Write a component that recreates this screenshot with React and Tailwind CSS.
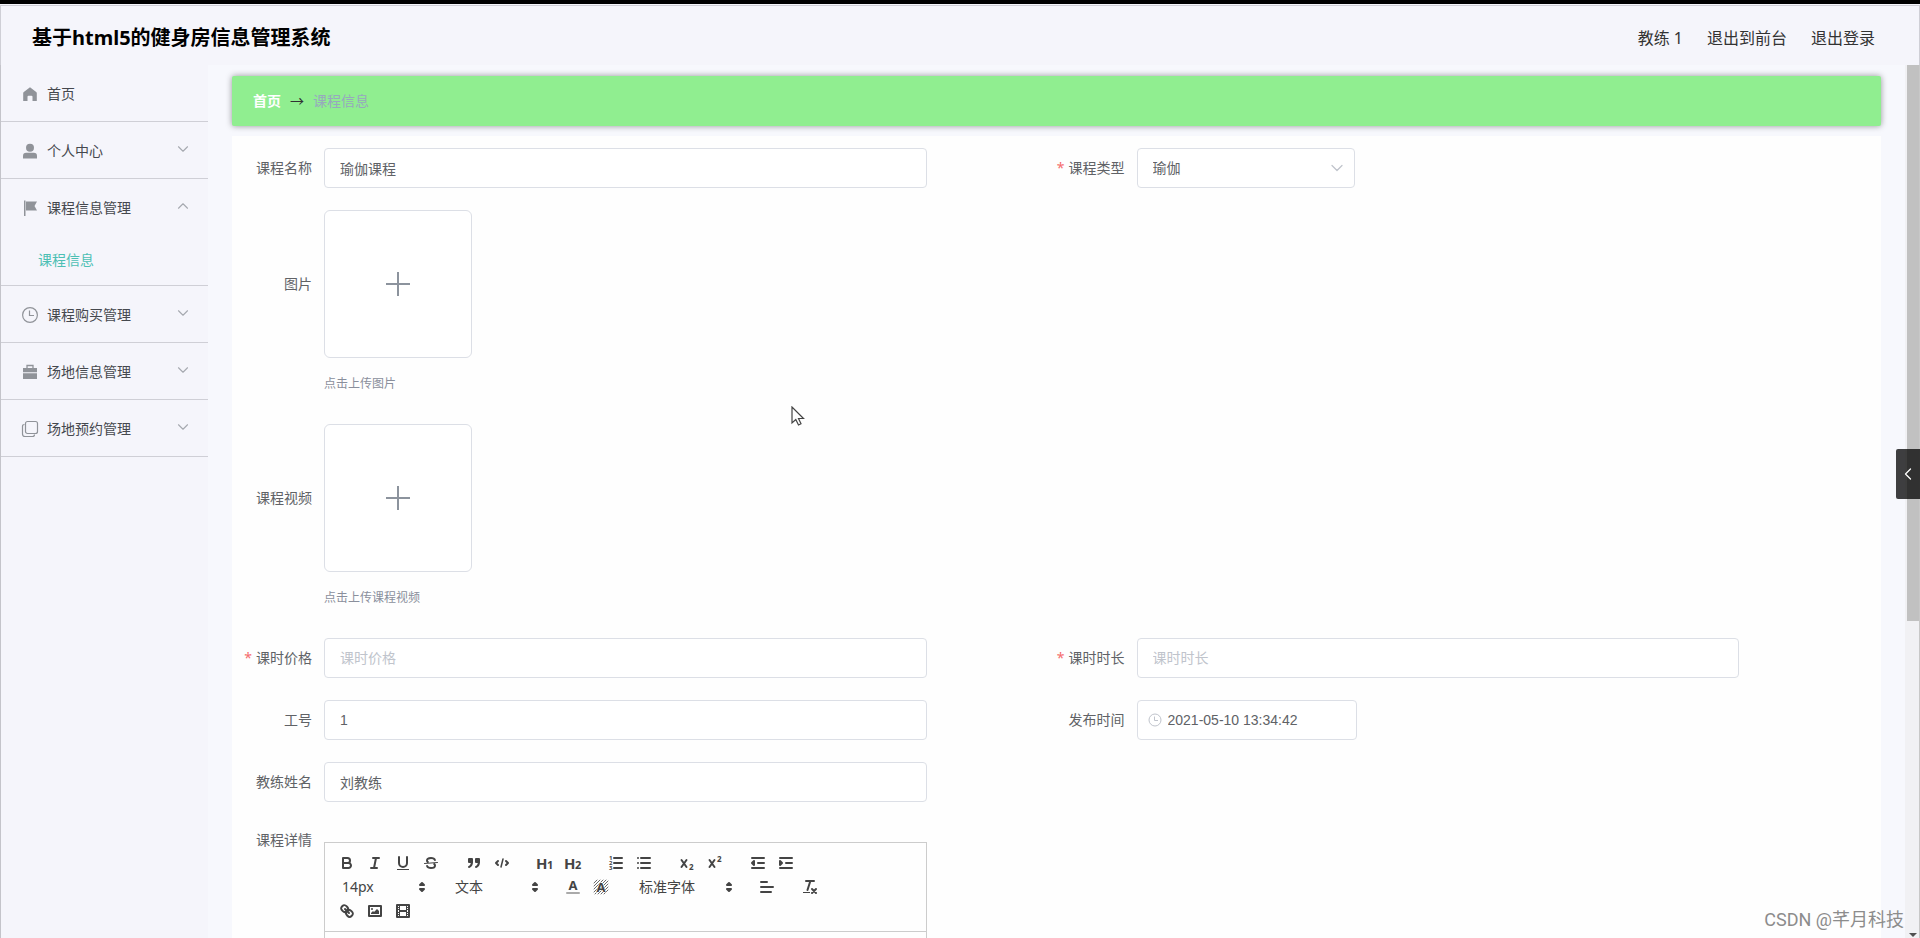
import React, { useState } from "react";
import { ChevronDown, ChevronUp, ChevronLeft } from "lucide-react";

// ---------- sidebar icons ----------
const HomeIcon = () => (
  <svg viewBox="0 0 18 18" className="w-[18px] h-[18px]" fill="currentColor">
    <path d="M9 2.2 L15.2 7 a1.4 1.4 0 0 1 .6 1.2 V16 h-4.3 v-4.2 a1 1 0 0 0-1-1 h-3 a1 1 0 0 0-1 1 V16 H2.200 V8.200 A1.400 1.400 0 0 1 2.800 7 Z" />
  </svg>
);
const UserIcon = () => (
  <svg viewBox="0 0 18 18" className="w-[18px] h-[18px]" fill="currentColor">
    <circle cx="9" cy="5.700" r="4" />
    <path d="M2 16.500 v-2.500 a3.200 3.200 0 0 1 3.200-3.200 h7.600 a3.200 3.200 0 0 1 3.200 3.200 v2.500 Z" />
  </svg>
);
const FlagIcon = () => (
  <svg viewBox="0 0 18 18" className="w-[18px] h-[18px]" fill="currentColor">
    <path d="M3 1.500 h1.500 v15.500 H3 Z" />
    <path d="M5 2.500 H16 l-2.500 4.500 2.500 4.500 H5 Z" />
  </svg>
);
const ClockIcon = () => (
  <svg viewBox="0 0 18 18" className="w-[18px] h-[18px]" fill="none" stroke="currentColor" strokeWidth="1.200">
    <circle cx="9" cy="9" r="7.400" />
    <path d="M8.500 4.500 V9.500 H13" />
  </svg>
);
const CaseIcon = () => (
  <svg viewBox="0 0 18 18" className="w-[18px] h-[18px]" fill="currentColor">
    <path d="M6 5 V2.500 h6 V5" fill="none" stroke="currentColor" strokeWidth="1.300" />
    <path d="M2 5 h14 v4.200 H2 Z M2 10.200 h14 V16 H2 Z" />
  </svg>
);
const CopyIcon = () => (
  <svg viewBox="0 0 18 18" className="w-[18px] h-[18px]" fill="none" stroke="currentColor" strokeWidth="1.200">
    <rect x="4.500" y="1.500" width="12" height="12" rx="2" />
    <path d="M3.500 4.500 Q1.500 4.500 1.500 6.500 V14 Q1.500 16.500 4 16.500 H11.500 Q13.500 16.500 13.500 14.500" />
  </svg>
);

const MENU = [
  { title: "首页", icon: HomeIcon },
  { title: "个人中心", icon: UserIcon, children: [] },
  { title: "课程信息管理", icon: FlagIcon, children: ["课程信息"], open: true },
  { title: "课程购买管理", icon: ClockIcon, children: [] },
  { title: "场地信息管理", icon: CaseIcon, children: [] },
  { title: "场地预约管理", icon: CopyIcon, children: [] },
];

// ---------- editor toolbar icons ----------
const Icon = ({ children }) => (
  <svg
    viewBox="0 0 18 18"
    className="w-[18px] h-[18px] overflow-visible"
    fill="none"
    stroke="#444"
    strokeWidth="2"
    strokeLinecap="round"
    strokeLinejoin="round"
  >
    {children}
  </svg>
);

const Letter = ({ x, y, size, children, anchor = "start" }) => (
  <text
    x={x}
    y={y}
    fontSize={size}
    textAnchor={anchor}
    fill="#444"
    stroke="none"
    fontWeight="bold"
    fontFamily="Noto Sans, sans-serif"
  >
    {children}
  </text>
);

const ICONS = {
  bold: (
    <Icon>
      <path d="M5,4H9.500A2.500,2.500,0,0,1,12,6.500v0A2.500,2.500,0,0,1,9.500,9H5V4Z" />
      <path d="M5,9h5.500A2.500,2.500,0,0,1,13,11.500v0A2.500,2.500,0,0,1,10.500,14H5V9Z" />
    </Icon>
  ),
  italic: (
    <Icon>
      <path d="M7 4H13M5 14H11M8 14L10 4" />
    </Icon>
  ),
  underline: (
    <Icon>
      <path d="M5,3V9a4,4,0,0,0,8,0V3" />
      <rect fill="#444" stroke="none" x="3" y="15" width="12" height="1" />
    </Icon>
  ),
  strike: (
    <Icon>
      <path strokeWidth="1" d="M15.500 8.500L2.500 9.500" />
      <path d="M12.900 6C12.500 4.800 10.900 4 9 4 6.700 4 5 5 5 6.500 5 7.200 5.200 7.700 5.800 8M5.100 12C5.500 13.200 7.100 14 9 14 11.300 14 13 13 13 11.500 13 10.800 12.800 10.300 12.200 10" />
    </Icon>
  ),
  blockquote: (
    <Icon>
      <rect fill="#444" x="4" y="5" width="3" height="3" />
      <rect fill="#444" x="11" y="5" width="3" height="3" />
      <path fill="#444" d="M7,8c0,4-3,5-3,5M14,8c0,4-3,5-3,5" />
    </Icon>
  ),
  code: (
    <Icon>
      <path d="M5 7L3 9L5 11M13 7L15 9L13 11" />
      <path strokeWidth="1.500" d="M10 5L8 13" />
    </Icon>
  ),
  h1: (
    <Icon>
      <Letter x="0" y="15" size="15">H</Letter>
      <Letter x="11" y="15" size="11">1</Letter>
    </Icon>
  ),
  h2: (
    <Icon>
      <Letter x="0" y="15" size="15">H</Letter>
      <Letter x="11" y="15" size="11">2</Letter>
    </Icon>
  ),
  ordered: (
    <Icon>
      <path d="M7 4H15M7 9H15M7 14H15" />
      <Letter x="2" y="6" size="6">1</Letter>
      <Letter x="2" y="11" size="6">2</Letter>
      <Letter x="2" y="16" size="6">3</Letter>
    </Icon>
  ),
  bullet: (
    <Icon>
      <path d="M6 4H15M6 9H15M6 14H15M3 4H3M3 9H3M3 14H3" />
    </Icon>
  ),
  sub: (
    <Icon>
      <path d="M3.500 6L8.500 13M8.500 6L3.500 13" />
      <Letter x="11" y="16" size="8">2</Letter>
    </Icon>
  ),
  sup: (
    <Icon>
      <path d="M3.500 6L8.500 13M8.500 6L3.500 13" />
      <Letter x="11" y="8" size="8">2</Letter>
    </Icon>
  ),
  outdent: (
    <Icon>
      <path d="M3 4H15M9 9H15M3 14H15" />
      <path fill="#444" d="M5 7V11L3 9Z" />
    </Icon>
  ),
  indent: (
    <Icon>
      <path d="M3 4H15M9 9H15M3 14H15" />
      <path fill="#444" d="M3 7V11L5 9Z" />
    </Icon>
  ),
  color: (
    <Icon>
      <Letter x="9" y="12" size="13" anchor="middle">A</Letter>
      <path stroke="#aaa" d="M3 15H15" />
    </Icon>
  ),
  background: (
    <Icon>
      <path
        strokeWidth="0.800"
        d="M2 5L5 2M2 8L8 2M2 11L11 2M2 14L14 2M3 16L16 3M6 16L16 6M9 16L16 9M12 16L16 12"
      />
      <text
        x="9"
        y="14"
        fontSize="13"
        textAnchor="middle"
        fill="#444"
        stroke="white"
        strokeWidth="1"
        paintOrder="stroke"
        fontWeight="bold"
        fontFamily="Noto Sans, sans-serif"
      >
        A
      </text>
    </Icon>
  ),
  align: (
    <Icon>
      <path d="M3 4H9M3 9H15M3 14H13" />
    </Icon>
  ),
  clean: (
    <Icon>
      <path d="M5 3H13M6.500 12L9.350 3" />
      <path d="M11 11L15 15M15 11L11 15" />
      <rect fill="#444" stroke="none" x="2" y="14" width="7" height="1" />
    </Icon>
  ),
  link: (
    <Icon>
      <path d="M7 7L11 11" />
      <path d="M8.900,4.577a3.476,3.476,0,0,1,.36,4.679A3.476,3.476,0,0,1,4.577,8.900C3.185,7.500,2.035,6.400,4.217,4.217S7.500,3.185,8.900,4.577Z" />
      <path d="M13.423,9.100a3.476,3.476,0,0,0-4.679-.36,3.476,3.476,0,0,0,.36,4.679c1.392,1.392,2.500,2.542,4.679.36S14.815,10.500,13.423,9.100Z" />
    </Icon>
  ),
  image: (
    <Icon>
      <rect x="3" y="4" width="12" height="10" />
      <circle fill="#444" stroke="none" cx="6" cy="7" r="1" />
      <path fill="#444" stroke="none" d="M5 12V11L7 9L8 10L11 7L13 9V12Z" />
    </Icon>
  ),
  video: (
    <Icon>
      <rect x="3" y="3" width="12" height="12" />
      <path
        fill="#444"
        stroke="none"
        d="M5 3h1v12H5ZM12 3h1v12H12ZM5 8h8v2H5ZM3 5h3v1H3ZM3 7h3v1H3ZM3 10h3v1H3ZM3 12h3v1H3ZM12 5h3v1H12ZM12 7h3v1H12ZM12 10h3v1H12ZM12 12h3v1H12Z"
      />
    </Icon>
  ),
};

const TOOLBAR = [
  ["bold", "italic", "underline", "strike"],
  ["blockquote", "code"],
  ["h1", "h2"],
  ["ordered", "bullet"],
  ["sub", "sup"],
  ["outdent", "indent"],
  { picker: "14px", width: "w-[98px]" },
  { picker: "文本", width: "w-[98px]" },
  ["color", "background"],
  { picker: "标准字体", width: "w-[108px]" },
  ["align"],
  ["clean"],
  ["link", "image", "video"],
];

function Toolbar() {
  return (
    <div className="flex flex-wrap p-2 border-b border-[#ccc]">
      {TOOLBAR.map((group, idx) =>
        Array.isArray(group) ? (
          <div key={idx} className="flex mr-[15px]">
            {group.map((name) => (
              <button
                key={name}
                type="button"
                aria-label={name}
                className="w-7 h-6 flex items-center justify-center"
              >
                {ICONS[name]}
              </button>
            ))}
          </div>
        ) : (
          <button
            key={idx}
            type="button"
            className={`${group.width} h-6 mr-[15px] pl-[9px] flex items-center justify-between text-sm leading-6 text-[#444]`}
          >
            {group.picker}
            <svg viewBox="0 0 18 18" className="w-[18px] h-[18px]" fill="#444" stroke="#444" strokeWidth="2" strokeLinejoin="round">
              <path d="M7 11L9 13L11 11ZM7 7L9 5L11 7Z" />
            </svg>
          </button>
        ),
      )}
    </div>
  );
}

// ---------- form pieces ----------
const INPUT =
  "w-full h-10 px-[15px] text-sm text-[#606266] placeholder-[#c0c4cc] bg-white border border-[#dcdfe6] rounded font-['Liberation_Sans','Noto_Sans_CJK_SC',sans-serif] outline-none";

function FormItem({ id, label, required, children }) {
  return (
    <div className="flex mb-[22px] pr-[130px]">
      <label
        htmlFor={id}
        className="w-20 pr-3 shrink-0 min-h-10 max-h-[148px] flex items-center justify-end text-sm whitespace-nowrap text-[#606266]"
      >
        {required && <span className="mr-1 text-[#f56c6c]">*</span>}
        {label}
      </label>
      <div className="flex-1 min-w-0">{children}</div>
    </div>
  );
}

function Upload({ id, tip }) {
  return (
    <>
      <label
        htmlFor={id}
        className="w-[148px] h-[148px] flex items-center justify-center bg-white border border-[#dcdfe6] rounded-md cursor-pointer"
      >
        <input id={id} type="file" className="hidden" />
        <svg viewBox="0 0 24 24" className="w-6 h-6" stroke="#8c939d" strokeWidth="2">
          <path d="M12 0V24M0 12H24" />
        </svg>
      </label>
      <div className="pt-2 text-xs leading-9 text-[#8a8f9c]">{tip}</div>
    </>
  );
}

export default function App() {
  const [form, setForm] = useState({
    name: "瑜伽课程",
    type: "瑜伽",
    price: "",
    duration: "",
    workNo: "1",
    date: "2021-05-10 13:34:42",
    coach: "刘教练",
  });

  const bind = (key) => ({
    id: key,
    value: form[key],
    onChange: (e) => setForm({ ...form, [key]: e.target.value }),
  });

  return (
    <div className="relative h-screen flex flex-col overflow-hidden border-t-4 border-black bg-[#f5f5fb] font-['Noto_Sans','Noto_Sans_CJK_SC',sans-serif]">
      {/* HEADER */}
      <header className="mt-px h-[60px] shrink-0 flex items-center justify-between pl-[31px] pr-11 pt-1 border-t border-x border-[#cfcfd6]">
        <h1 className="text-xl font-bold text-black">
          基于html5的健身房信息管理系统
        </h1>
        <nav className="flex gap-6 text-base text-[#333]">
          <span>教练 1</span>
          <a href="#front">退出到前台</a>
          <a href="#logout">退出登录</a>
        </nav>
      </header>

      <div className="flex flex-1 min-h-0">
        {/* SIDEBAR */}
        <aside className="w-[208px] shrink-0 border-l border-[#c4c4ca]">
          {MENU.map(({ title, icon: MenuIcon, children, open }) => (
            <div key={title} className="border-b border-[#cfcfd6]">
              <a
                href="#menu"
                className="h-14 px-5 pt-0.5 flex items-center text-sm text-[#45484e]"
              >
                <span className="w-[18px] mr-2 text-[#909399]">
                  <MenuIcon />
                </span>
                <span className="flex-1">{title}</span>
                {children &&
                  (open ? (
                    <ChevronUp className="w-[18px] h-[18px] -mr-1 mb-1 text-[#a6a9b0]" strokeWidth={1.5} />
                  ) : (
                    <ChevronDown className="w-[18px] h-[18px] -mr-1 mb-1 text-[#a6a9b0]" strokeWidth={1.5} />
                  ))}
              </a>
              {open &&
                children.map((child) => (
                  <a
                    key={child}
                    href="#course"
                    className="h-[50px] pl-[37px] flex items-center text-sm text-[#4dbfb4]"
                  >
                    {child}
                  </a>
                ))}
            </div>
          ))}
        </aside>

        {/* CONTENT */}
        <main className="flex-1 min-w-0 overflow-hidden bg-[#f7f8fd] pt-[11px] px-6">
          <div className="h-[50px] mb-2.5 px-[21px] flex items-center text-sm bg-[#90ee90] rounded-xs shadow-[0_0_6px_rgba(0,0,0,0.4)]">
            <a href="#home" className="font-bold text-white">
              首页
            </a>
            <span className="mx-[9px] text-[#303133]">→</span>
            <span className="text-[#97a8be]">课程信息</span>
          </div>

          <form className="pt-3 px-3 bg-[#fefefe]">
            <div className="grid grid-cols-2">
              <FormItem id="name" label="课程名称">
                <input type="text" className={INPUT} {...bind("name")} />
              </FormItem>
              <FormItem id="type" label="课程类型" required>
                <div className="relative w-[218px]">
                  <select className={`${INPUT} appearance-none`} {...bind("type")}>
                    <option>瑜伽</option>
                  </select>
                  <ChevronDown
                    className="absolute right-2 top-2.5 w-5 h-5 text-[#c0c4cc] pointer-events-none"
                    strokeWidth={1.5}
                  />
                </div>
              </FormItem>
            </div>

            <FormItem id="picture" label="图片">
              <Upload id="picture" tip="点击上传图片" />
            </FormItem>
            <FormItem id="video" label="课程视频">
              <Upload id="video" tip="点击上传课程视频" />
            </FormItem>

            <div className="grid grid-cols-2">
              <FormItem id="price" label="课时价格" required>
                <input type="text" placeholder="课时价格" className={INPUT} {...bind("price")} />
              </FormItem>
              <FormItem id="duration" label="课时时长" required>
                <input type="text" placeholder="课时时长" className={INPUT} {...bind("duration")} />
              </FormItem>
              <FormItem id="workNo" label="工号">
                <input type="text" className={INPUT} {...bind("workNo")} />
              </FormItem>
              <FormItem id="date" label="发布时间">
                <div className="w-[220px] h-10 pl-2.5 flex items-center gap-1.5 bg-white border border-[#dcdfe6] rounded text-[#c0c4cc]">
                  <svg viewBox="0 0 14 14" className="w-3.5 h-3.5 shrink-0" fill="none" stroke="currentColor">
                    <circle cx="7" cy="7" r="6" />
                    <path d="M6.500 3.500V7.500H10" />
                  </svg>
                  <input
                    type="text"
                    className="flex-1 min-w-0 text-sm text-[#606266] font-['Liberation_Sans',sans-serif] outline-none"
                    {...bind("date")}
                  />
                </div>
              </FormItem>
              <FormItem id="coach" label="教练姓名">
                <input type="text" className={INPUT} {...bind("coach")} />
              </FormItem>
            </div>

            <div className="grid grid-cols-2">
              <div className="flex pr-[130px]">
                <label htmlFor="detail" className="w-20 pr-3 shrink-0 text-right text-sm leading-8 whitespace-nowrap text-[#606266]">
                  课程详情
                </label>
                <div className="flex-1 min-w-0 mt-[18px] border border-[#ccc]">
                  <Toolbar />
                  <textarea id="detail" className="block w-full h-80 px-4 py-3 text-sm outline-none resize-none" />
                </div>
              </div>
            </div>
          </form>
        </main>

        {/* SCROLLBAR */}
        <div className="w-[15px] pl-0.5 shrink-0 flex flex-col justify-between items-center bg-[#f1f1f4] border-r border-[#c8c8c8]">
          <div className="w-full h-7/11 bg-[#c1c1c1]" />
          <svg viewBox="0 0 8 5" className="w-2 h-[5px]" fill="#505050">
            <path d="M0 0H8L4 4Z" />
          </svg>
        </div>
      </div>

      {/* drawer handle */}
      <button
        type="button"
        aria-label="展开"
        className="absolute right-0 top-[445px] w-6 h-[50px] flex items-center justify-center rounded-l-xs bg-black/75 text-white"
      >
        <ChevronLeft className="w-5 h-5" strokeWidth={1.5} />
      </button>

      {/* mouse pointer */}
      <svg viewBox="0 0 14 20" className="absolute left-[41.200%] top-[402px] w-3.5 h-5" fill="white" stroke="#444" strokeWidth="1.200">
        <path d="M1 1V17L4.800 13.500L7.500 19L10 17.800L7.500 12.500H12.500Z" />
      </svg>

      {/* watermark */}
      <div className="absolute right-4 bottom-1 text-lg leading-7 text-[#8c8c8c] font-['Roboto','Noto_Sans_CJK_SC',sans-serif]">
        CSDN @芊月科技
      </div>
    </div>
  );
}
